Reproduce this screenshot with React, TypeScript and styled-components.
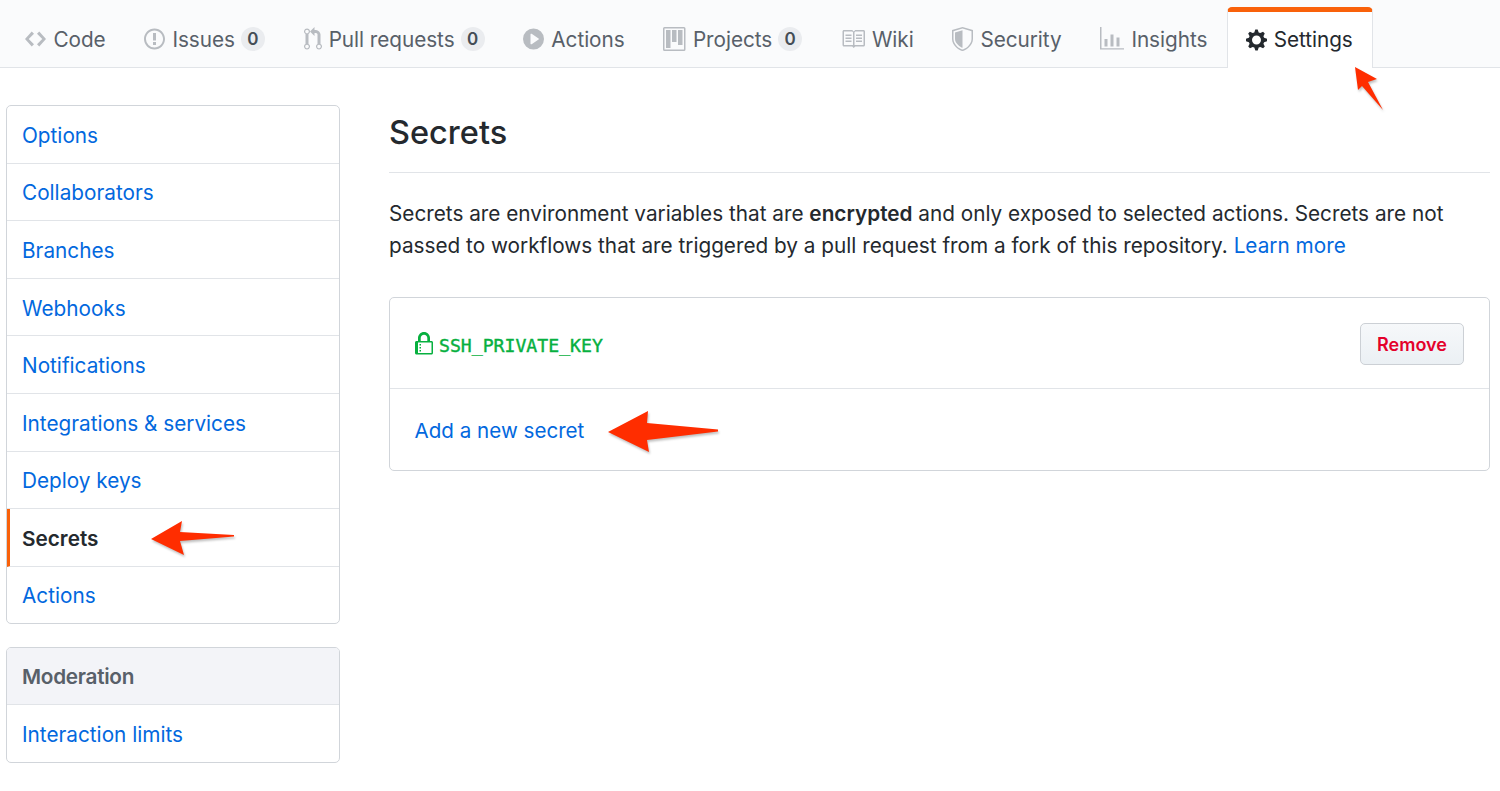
import { FC } from "react";
import styled, { createGlobalStyle } from "styled-components";

const Global = createGlobalStyle`
  html, body {
    margin: 0;
    padding: 0;
    background: #fff;
    color: #24292e;
    font-family: Inter, "Liberation Sans", sans-serif;
    overflow: hidden;
  }
`;

const Page = styled.div`
  position: relative;
  width: 1500px;
  height: 791px;
`;

const TabBar = styled.nav`
  display: flex;
  align-items: flex-end;
  height: 67px;
  padding-left: 6px;
  background: #fafbfc;
  border-bottom: 1px solid #e1e4e8;
`;

const Tab = styled.a<{ $active?: boolean }>`
  display: flex;
  align-items: center;
  box-sizing: border-box;
  height: ${(p) => (p.$active ? "61px" : "67px")};
  margin-bottom: ${(p) => (p.$active ? "-1px" : "0")};
  padding: ${(p) => (p.$active ? "0 19px 1px 18px" : "17px 19.4px 6px")};
  font-size: 20.75px;
  letter-spacing: -0.05px;
  color: ${(p) => (p.$active ? "#24292e" : "#586069")};
  background: ${(p) => (p.$active ? "#fff" : "transparent")};
  border-top: ${(p) => (p.$active ? "5px solid #f9610a" : "none")};
  border-left: ${(p) => (p.$active ? "1px solid #e1e4e8" : "none")};
  border-right: ${(p) => (p.$active ? "1px solid #e1e4e8" : "none")};
  border-radius: ${(p) => (p.$active ? "5px 5px 0 0" : "0")};
`;

const TabIcon = styled.svg<{ $active?: boolean }>`
  height: 24px;
  margin-right: 7px;
  fill: ${(p) => (p.$active ? "#24292e" : "#b8bcc1")};
  fill-rule: evenodd;
  flex: none;
`;

const Counter = styled.span`
  display: inline-flex;
  align-items: center;
  justify-content: center;
  width: 24px;
  height: 24px;
  margin-left: 6px;
  border-radius: 50%;
  background: #eaecef;
  color: #444d56;
  font-size: 17px;
  font-weight: 600;
`;

const Layout = styled.div`
  display: flex;
  padding: 37px 10px 0 6px;
`;

const Sidebar = styled.aside`
  display: flex;
  flex-direction: column;
  gap: 23px;
  width: 334px;
  flex: none;
  margin-right: 49px;
`;

const Menu = styled.div`
  border: 1px solid #d1d5da;
  border-radius: 5px;
  overflow: hidden;
`;

const MenuHeading = styled.div`
  display: flex;
  align-items: center;
  box-sizing: border-box;
  height: 57px;
  padding-left: 15px;
  background: #f3f4f8;
  border-bottom: 1px solid #e1e4e8;
  color: #586069;
  font-size: 20.75px;
  font-weight: 600;
  letter-spacing: -0.3px;
`;

const MenuItem = styled.a<{ $selected?: boolean }>`
  display: flex;
  align-items: center;
  box-sizing: border-box;
  height: 57.6px;
  padding: 2px 0 0 ${(p) => (p.$selected ? "12px" : "15px")};
  color: ${(p) => (p.$selected ? "#24292e" : "#0268de")};
  font-size: 20.75px;
  font-weight: ${(p) => (p.$selected ? 600 : 400)};
  border-left: ${(p) => (p.$selected ? "3px solid #f9610a" : "none")};
  border-bottom: 1px solid #e1e4e8;

  &:last-child {
    border-bottom: none;
    height: 56.6px;
    padding-top: 1px;
  }
`;

const Main = styled.main`
  flex: 1;
`;

const Title = styled.h2`
  display: flex;
  align-items: center;
  box-sizing: border-box;
  height: 68px;
  margin: 0 0 25px;
  padding-bottom: 10px;
  font-size: 32.5px;
  font-weight: 500;
  line-height: 1;
  border-bottom: 1px solid #e1e4e8;
`;

const Intro = styled.p`
  margin: 0 0 36px;
  font-size: 20.75px;
  line-height: 31.5px;
  color: #24292e;

  b {
    font-weight: 600;
  }
`;

const IntroLine = styled.span`
  display: block;
  white-space: nowrap;
`;

const Link = styled.a`
  color: #0268de;
`;

const SecretsBox = styled.section`
  border: 1px solid #d1d5da;
  border-radius: 5px;
`;

const SecretRow = styled.div`
  display: flex;
  align-items: center;
  justify-content: space-between;
  box-sizing: border-box;
  height: 91px;
  padding: 2px 25px 0;
  border-bottom: 1px solid #e1e4e8;
`;

const SecretName = styled.span`
  display: flex;
  align-items: center;
  gap: 6px;
  font-family: "DejaVu Sans Mono", "Liberation Mono", monospace;
  font-size: 18.15px;
  color: #07b03f;
  -webkit-text-stroke: 0.4px #07b03f;
`;

const KeyText = styled.span`
  padding-top: 2px;
`;

const LockIcon = styled.svg`
  width: 18px;
  height: 24px;
  fill: #07b03f;
  flex: none;
`;

const RemoveButton = styled.button`
  box-sizing: border-box;
  width: 104px;
  height: 42px;
  padding: 0;
  border: 1px solid #ccd0d5;
  border-radius: 5px;
  background: linear-gradient(#f6f8fa, #ebf0f4);
  color: #e4002b;
  font-family: inherit;
  font-size: 18px;
  font-weight: 600;
`;

const AddRow = styled.div`
  display: flex;
  align-items: center;
  box-sizing: border-box;
  height: 81px;
  padding: 2px 25px 0 24.5px;
  font-size: 20.6px;
`;

const Annotation = styled.svg<{ $x: number; $y: number }>`
  position: absolute;
  left: ${(p) => p.$x}px;
  top: ${(p) => p.$y}px;
  fill: #ff2d00;
  filter: drop-shadow(1px 2px 1px rgba(0, 0, 0, 0.25));
`;

const icons: Record<string, { box: string; d: string }> = {
  code: { box: "0 0 14 16", d: "M9.5 3L8 4.5 11.5 8 8 11.5 9.5 13 14 8 9.5 3zm-5 0L0 8l4.5 5L6 11.5 2.5 8 6 4.5 4.5 3z" },
  issue: { box: "0 0 14 16", d: "M7 2.3c3.14 0 5.7 2.56 5.7 5.7s-2.56 5.7-5.7 5.7A5.71 5.71 0 0 1 1.3 8c0-3.14 2.56-5.7 5.7-5.7zM7 1C3.14 1 0 4.14 0 8s3.14 7 7 7 7-3.14 7-7-3.14-7-7-7zm1 3H6v5h2V4zm0 6H6v2h2v-2z" },
  pull: { box: "0 0 12 16", d: "M11 11.28V5c-.03-.78-.34-1.47-.94-2.06C9.46 2.35 8.78 2.03 8 2H7V0L4 3l3 3V4h1c.27.02.48.11.69.31.21.2.3.42.31.69v6.28A1.993 1.993 0 0 0 10 15a1.993 1.993 0 0 0 1-3.72zm-1 2.92c-.66 0-1.2-.55-1.2-1.2 0-.65.55-1.2 1.2-1.2.65 0 1.2.55 1.2 1.2 0 .65-.55 1.2-1.2 1.2zM4 3c0-1.11-.89-2-2-2a1.993 1.993 0 0 0-1 3.72v6.56A1.993 1.993 0 0 0 2 15a1.993 1.993 0 0 0 1-3.72V4.72c.59-.34 1-.98 1-1.72zm-.8 10c0 .66-.55 1.2-1.2 1.2-.65 0-1.2-.55-1.2-1.2 0-.65.55-1.2 1.2-1.2.65 0 1.2.55 1.2 1.2zM2 4.2C1.34 4.2.8 3.65.8 3c0-.65.55-1.2 1.2-1.2.65 0 1.2.55 1.2 1.2 0 .65-.55 1.2-1.2 1.2z" },
  play: { box: "0 0 14 16", d: "M14 8A7 7 0 1 1 0 8a7 7 0 0 1 14 0zm-8.223 3.482l4.599-3.066a.5.5 0 0 0 0-.832L5.777 4.518A.5.5 0 0 0 5 4.934v6.132a.5.5 0 0 0 .777.416z" },
  project: { box: "0 0 15 16", d: "M10 12h3V2h-3v10zm-4-2h3V2H6v8zm-4 4h3V2H2v12zm-1 1h13V1H1v14zM14 0H1a1 1 0 0 0-1 1v14a1 1 0 0 0 1 1h13a1 1 0 0 0 1-1V1a1 1 0 0 0-1-1z" },
  book: { box: "0 0 16 16", d: "M3 5h4v1H3V5zm0 3h4V7H3v1zm0 2h4V9H3v1zm11-5h-4v1h4V5zm0 2h-4v1h4V7zm0 2h-4v1h4V9zm2-6v9c0 .55-.45 1-1 1H9.5l-1 1-1-1H2c-.55 0-1-.45-1-1V3c0-.55.45-1 1-1h5.5l1 1 1-1H15c.55 0 1 .45 1 1zm-8 .5L7.5 3H2v9h6V3.5zm7-.5H9.5l-.5.5V12h6V3z" },
  shield: { box: "0 0 14 16", d: "M7 0L0 2v6.02C0 12.69 5.31 16 7 16c1.69 0 7-3.31 7-7.98V2L7 0zM7 1L1 2.75v5.27c0 3.9 4.5 6.9 6 6.98 1.5-.08 6-3.08 6-6.98V2.75L7 1zM7 2.2L2 3.6v4.42c0 3 3.6 5.5 5 5.8V2.2z" },
  graph: { box: "0 0 16 16", d: "M16 14.2V15H0V0h1v14.2h15zM5 13H3V8h2v5zm4 0H7V5h2v8zm4 0h-2V7h2v6z" },
  gear: { box: "0 0 14 16", d: "M14 8.77v-1.6l-1.94-.64-.45-1.09.88-1.84-1.13-1.13-1.81.91-1.09-.45-.69-1.92h-1.6l-.63 1.94-1.11.45-1.84-.88-1.13 1.13.91 1.81-.45 1.09L0 7.23v1.59l1.94.64.45 1.09-.88 1.84 1.13 1.13 1.81-.91 1.09.45.69 1.92h1.59l.63-1.94 1.11-.45 1.84.88 1.13-1.13-.92-1.81.47-1.09L14 8.75v.02zM7 11c-1.66 0-3-1.34-3-3s1.34-3 3-3 3 1.34 3 3-1.34 3-3 3z" },
};

const Icon: FC<{ name: string; active?: boolean }> = ({ name, active }) => (
  <TabIcon viewBox={icons[name].box} $active={active}>
    <path d={icons[name].d} />
  </TabIcon>
);

const tabs: { label: string; icon: string; count?: number }[] = [
  { label: "Code", icon: "code" },
  { label: "Issues", icon: "issue", count: 0 },
  { label: "Pull requests", icon: "pull", count: 0 },
  { label: "Actions", icon: "play" },
  { label: "Projects", icon: "project", count: 0 },
  { label: "Wiki", icon: "book" },
  { label: "Security", icon: "shield" },
  { label: "Insights", icon: "graph" },
];

const menu = ["Options", "Collaborators", "Branches", "Webhooks", "Notifications", "Integrations & services", "Deploy keys", "Secrets", "Actions"];

const LeftArrow: FC<{ x: number; y: number }> = ({ x, y }) => (
  <Annotation $x={x} $y={y} width="112" height="42" viewBox="0 0 112 42">
    <path d="M0 21 L40 0 L39 12 L110 18.5 L110 20.5 L39 29 L41 41 Z" />
  </Annotation>
);

const SmallArrow: FC<{ x: number; y: number }> = ({ x, y }) => (
  <Annotation $x={x} $y={y} width="86" height="36" viewBox="0 0 86 36">
    <path d="M0 18 L31 0 L29 11 L83 14 L83 15.5 L29 20 L33 34 Z" />
  </Annotation>
);

const App: FC = () => (
  <Page>
    <Global />
    <TabBar>
      {tabs.map((t) => (
        <Tab key={t.label}>
          <Icon name={t.icon} />
          {t.label}
          {t.count !== undefined && <Counter>{t.count}</Counter>}
        </Tab>
      ))}
      <Tab $active>
        <Icon name="gear" active />
        Settings
      </Tab>
    </TabBar>
    <Layout>
      <Sidebar>
        <Menu>
          {menu.map((m) => (
            <MenuItem key={m} $selected={m === "Secrets"}>{m}</MenuItem>
          ))}
        </Menu>
        <Menu>
          <MenuHeading>Moderation</MenuHeading>
          <MenuItem>Interaction limits</MenuItem>
        </Menu>
      </Sidebar>
      <Main>
        <Title>Secrets</Title>
        <Intro>
          <IntroLine>
            Secrets are environment variables that are <b>encrypted</b> and only exposed to selected actions. Secrets are not
          </IntroLine>
          <IntroLine>
            passed to workflows that are triggered by a pull request from a fork of this repository. <Link>Learn more</Link>
          </IntroLine>
        </Intro>
        <SecretsBox>
          <SecretRow>
            <SecretName>
              <LockIcon viewBox="0 0 12 16">
                <path d="M4 13H3v-1h1v1zm8-6v7c0 .55-.45 1-1 1H1c-.55 0-1-.45-1-1V7c0-.55.45-1 1-1h1V4c0-2.2 1.8-4 4-4s4 1.8 4 4v2h1c.55 0 1 .45 1 1zM3.8 6h4.41V4c0-1.22-.98-2.2-2.2-2.2-1.22 0-2.2.98-2.2 2.2v2H3.8zM11 7H2v7h9V7zM4 8H3v1h1V8zm0 2H3v1h1v-1z" />
              </LockIcon>
              <KeyText>SSH_PRIVATE_KEY</KeyText>
            </SecretName>
            <RemoveButton>Remove</RemoveButton>
          </SecretRow>
          <AddRow>
            <Link>Add a new secret</Link>
          </AddRow>
        </SecretsBox>
      </Main>
    </Layout>
    <Annotation $x={1354} $y={66} width="32" height="48" viewBox="0 0 32 48">
      <path d="M1 1 L23 13 L14 16 L29 44 L8 20 L4 24 Z" />
    </Annotation>
    <LeftArrow x={608} y={411} />
    <SmallArrow x={151} y={521} />
  </Page>
);

export default App;
